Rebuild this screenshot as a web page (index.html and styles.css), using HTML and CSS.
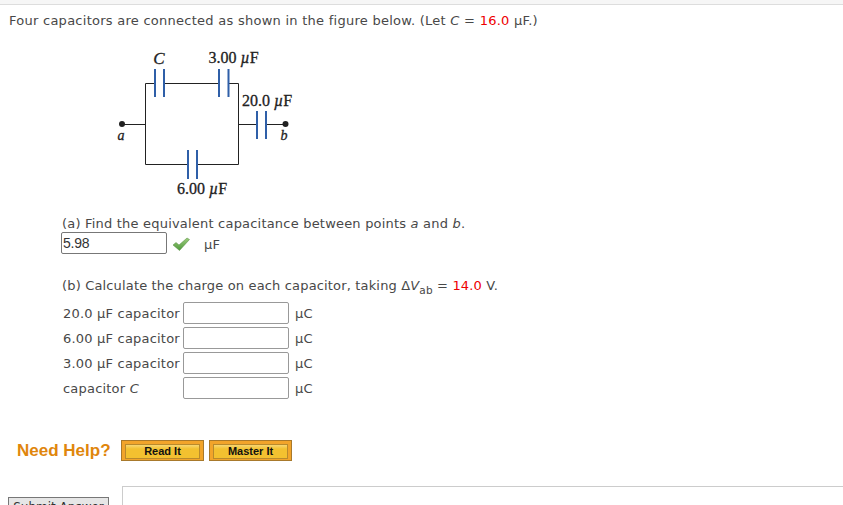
FILE: index.html
```html
<!DOCTYPE html>
<html lang="en">
<head>
    <meta charset="UTF-8">
    <meta name="viewport" content="width=device-width, initial-scale=1.0">
    <title>Capacitors question</title>
    <link rel="stylesheet" href="styles.css">
</head>
<body>
<div class="top-strip"></div>

<p class="question">Four capacitors are connected as shown in the figure below. (Let <i>C</i> = <span class="given">16.0</span> µF.)</p>

<svg class="circuit" width="200" height="160" viewBox="100 45 200 160">
    <defs>
        <linearGradient id="check-fill" x1="0" y1="0" x2="0" y2="1">
            <stop offset="0" stop-color="#9ccb7c"/>
            <stop offset="1" stop-color="#4f9a3c"/>
        </linearGradient>
    </defs>
    <g class="wire">
        <path d="M122 124.500H145.500M145.500 83.500V164.500H238.500V83.500H145.500M238.500 124.500H285"/>
    </g>
    <g class="gap">
        <rect x="156" y="80" width="7" height="7"/>
        <rect x="220" y="80" width="8" height="7"/>
        <rect x="258" y="121" width="7" height="7"/>
        <rect x="189" y="161" width="7" height="7"/>
    </g>
    <g class="plate">
        <path d="M155 69V97M164 69V97M219 69V97M228.500 69V97M257 111V139M266 111V139M188 150V179M197 150V179"/>
    </g>
    <circle class="dot" cx="122" cy="124" r="3"/>
    <circle class="dot" cx="285.500" cy="124" r="3"/>
    <text class="lbl ital big" x="159" y="64" text-anchor="middle">C</text>
    <text class="lbl" x="233.500" y="63" text-anchor="middle">3.00 <tspan class="ital">µ</tspan>F</text>
    <text class="lbl" x="267" y="106" text-anchor="middle">20.0 <tspan class="ital">µ</tspan>F</text>
    <text class="lbl" x="202" y="194" text-anchor="middle">6.00 <tspan class="ital">µ</tspan>F</text>
    <text class="lbl ital small" x="121" y="140" text-anchor="middle">a</text>
    <text class="lbl ital small" x="284" y="140" text-anchor="middle">b</text>
</svg>

<div class="part part-a">
    <p class="part-text">(a) Find the equivalent capacitance between points <i>a</i> and <i>b</i>.</p>
    <div class="answer-line">
        <input class="answer answer-done" type="text" value="5.98">
        <svg class="check" width="18" height="14" viewBox="0 0 18 14">
            <path d="M1 8L4 5.500L7 8L15 1L17.500 2.500L7.500 13.500Z" fill="url(#check-fill)"/>
        </svg>
        <span class="unit">µF</span>
    </div>
</div>

<div class="part part-b">
    <p class="part-text">(b) Calculate the charge on each capacitor, taking Δ<i>V</i><sub>ab</sub> = <span class="given">14.0</span> V.</p>
    <div class="charge-row">
        <span class="charge-label">20.0 µF capacitor</span>
        <input class="answer" type="text">
        <span class="charge-unit">µC</span>
    </div>
    <div class="charge-row">
        <span class="charge-label">6.00 µF capacitor</span>
        <input class="answer" type="text">
        <span class="charge-unit">µC</span>
    </div>
    <div class="charge-row">
        <span class="charge-label">3.00 µF capacitor</span>
        <input class="answer" type="text">
        <span class="charge-unit">µC</span>
    </div>
    <div class="charge-row">
        <span class="charge-label">capacitor <i>C</i></span>
        <input class="answer" type="text">
        <span class="charge-unit">µC</span>
    </div>
</div>

<div class="help">
    <span class="help-title">Need Help?</span>
    <button class="help-button"><span>Read It</span></button>
    <button class="help-button"><span>Master It</span></button>
</div>

<div class="bottom">
    <button class="submit">Submit Answer</button>
    <div class="work-box"></div>
</div>
</body>
</html>
```
FILE: styles.css
```css
html, body {
    height: 505px;
    overflow: hidden;
}

body {
    margin: 0;
    background-color: white;
    color: #484848;
    font-family: 'DejaVu Sans', Verdana, sans-serif;
    font-size: 13px;
    letter-spacing: 0.2px;
}

p {
    margin: 0;
}

.top-strip {
    height: 4px;
    background-color: #f6f6f6;
    border-bottom: 1px solid #dddddd;
}

.question {
    margin-left: 9px;
    margin-top: 8px;
    line-height: 16px;
    letter-spacing: 0.26px;
}

.given {
    color: #ee0000;
}

.circuit {
    display: block;
    margin-left: 100px;
    margin-top: 16px;
}

.wire path {
    fill: none;
    stroke: #222222;
    stroke-width: 1;
}

.gap rect {
    fill: white;
}

.plate path {
    fill: none;
    stroke: #2f5fa8;
    stroke-width: 2;
}

.dot {
    fill: #222222;
}

.lbl {
    font-family: 'Liberation Serif', serif;
    font-size: 16px;
    fill: #222222;
    letter-spacing: 0;
    stroke: #222222;
    stroke-width: 0.3;
}

.ital {
    font-style: italic;
}

.big {
    font-size: 17px;
}

.small {
    font-size: 14px;
}

.part-a {
    margin-left: 61px;
    margin-top: 11px;
}

.part-text {
    line-height: 16px;
    margin-left: 1px;
}

.answer-line {
    display: flex;
    align-items: center;
}

.answer {
    box-sizing: border-box;
    width: 106px;
    height: 22px;
    margin: 0;
    padding: 0 1px;
    border: 1px solid #999999;
    border-radius: 2px;
    background-color: white;
    font-family: 'Liberation Sans', sans-serif;
    font-size: 14px;
    letter-spacing: -0.2px;
    color: #333333;
}

.answer-done {
    border-color: #777777;
}

.check {
    margin-left: 5px;
    margin-top: 2px;
}

.check path {
    stroke: #4e8a3a;
    stroke-width: 0.5;
}

.unit {
    margin-left: 14px;
    padding-top: 2px;
}

.part-b {
    margin-left: 62px;
    margin-top: 24px;
}

.part-text sub {
    font-size: 10.5px;
    line-height: 0;
}

.part-b .part-text {
    margin-left: 0;
    margin-bottom: 6px;
    letter-spacing: 0.16px;
}

.charge-row {
    display: flex;
    align-items: center;
    height: 25px;
}

.charge-label {
    box-sizing: border-box;
    width: 121px;
    padding-left: 1px;
    padding-top: 2px;
}

.charge-unit {
    margin-left: 6px;
    padding-top: 2px;
}

.help {
    display: flex;
    align-items: center;
    margin-top: 40px;
    margin-left: 17px;
}

.help-title {
    width: 104px;
    color: #e0860c;
    font-family: 'Liberation Sans', sans-serif;
    font-size: 17px;
    font-weight: bold;
    letter-spacing: 0;
}

.help-button {
    width: 83px;
    height: 21px;
    margin: 0 5px 0 0;
    padding: 3px;
    border: 1px solid #a8792c;
    background-color: #f2a42a;
    cursor: pointer;
}

.help-button span {
    display: block;
    height: 13px;
    border: 1px solid #b98a2c;
    background: linear-gradient(#f7d774, #f3c130 30%);
    color: #111111;
    font-family: 'Liberation Sans', sans-serif;
    font-size: 11px;
    font-weight: bold;
    letter-spacing: 0;
    line-height: 13px;
    text-align: center;
}

.bottom {
    display: flex;
    align-items: flex-start;
    height: 19px;
    margin-top: 25px;
    margin-left: 8px;
    overflow: hidden;
}

.submit {
    flex: none;
    box-sizing: border-box;
    width: 101px;
    height: 24px;
    margin-top: 11px;
    padding: 0 0 4px;
    border: 1px solid #777777;
    background-color: #e6e6e6;
    color: #333333;
    font-family: 'DejaVu Sans', sans-serif;
    font-size: 12px;
    white-space: nowrap;
}

.work-box {
    flex: 1;
    height: 200px;
    margin-left: 13px;
    border-top: 1px solid #cccccc;
    border-left: 1px solid #cccccc;
}
```
